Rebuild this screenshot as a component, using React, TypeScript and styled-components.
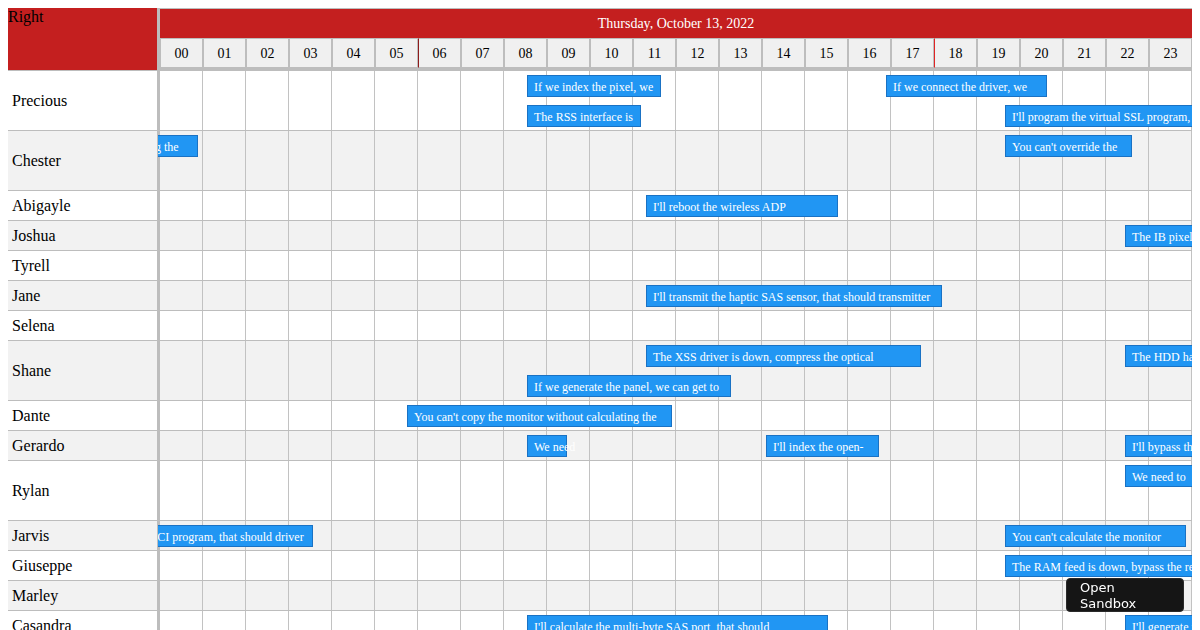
import React from "react";
import styled, {createGlobalStyle} from "styled-components";

const GlobalStyle = createGlobalStyle`
  body {
    margin: 8px;
    font-family: "Liberation Serif", "Times New Roman", serif;
    background: #ffffff;
    overflow: hidden;
  }
`;

const HOUR_W = 43;
const LANE_H = 30;

type SchedEvent = { x: number; w: number; lane: number; text: string };
type Resource = { name: string; lanes: number; events: Array<SchedEvent> };

const resources: Array<Resource> = [
    {
        name: "Precious", lanes: 2, events: [
            {x: 367, w: 134, lane: 0, text: "If we index the pixel, we"},
            {x: 726, w: 161, lane: 0, text: "If we connect the driver, we"},
            {x: 367, w: 114, lane: 1, text: "The RSS interface is"},
            {x: 845, w: 300, lane: 1, text: "I'll program the virtual SSL program, that"},
        ]
    },
    {
        name: "Chester", lanes: 2, events: [
            {x: -54, w: 92, lane: 0, text: "bypassing the"},
            {x: 845, w: 127, lane: 0, text: "You can't override the"},
        ]
    },
    {name: "Abigayle", lanes: 1, events: [{x: 486, w: 192, lane: 0, text: "I'll reboot the wireless ADP"}]},
    {name: "Joshua", lanes: 1, events: [{x: 965, w: 200, lane: 0, text: "The IB pixel is down"}]},
    {name: "Tyrell", lanes: 1, events: []},
    {
        name: "Jane", lanes: 1, events: [
            {x: 486, w: 296, lane: 0, text: "I'll transmit the haptic SAS sensor, that should transmitter"},
        ]
    },
    {name: "Selena", lanes: 1, events: []},
    {
        name: "Shane", lanes: 2, events: [
            {x: 486, w: 275, lane: 0, text: "The XSS driver is down, compress the optical"},
            {x: 965, w: 200, lane: 0, text: "The HDD hard drive is down"},
            {x: 367, w: 204, lane: 1, text: "If we generate the panel, we can get to"},
        ]
    },
    {
        name: "Dante", lanes: 1, events: [
            {x: 247, w: 265, lane: 0, text: "You can't copy the monitor without calculating the"},
        ]
    },
    {
        name: "Gerardo", lanes: 1, events: [
            {x: 367, w: 40, lane: 0, text: "We need"},
            {x: 606, w: 113, lane: 0, text: "I'll index the open-"},
            {x: 965, w: 200, lane: 0, text: "I'll bypass the"},
        ]
    },
    {name: "Rylan", lanes: 2, events: [{x: 965, w: 200, lane: 0, text: "We need to"}]},
    {
        name: "Jarvis", lanes: 1, events: [
            {x: -34, w: 187, lane: 0, text: "the PCI program, that should driver"},
            {x: 845, w: 181, lane: 0, text: "You can't calculate the monitor"},
        ]
    },
    {
        name: "Giuseppe", lanes: 1, events: [
            {x: 845, w: 300, lane: 0, text: "The RAM feed is down, bypass the redundant"},
        ]
    },
    {name: "Marley", lanes: 1, events: []},
    {
        name: "Casandra", lanes: 1, events: [
            {x: 367, w: 301, lane: 0, text: "I'll calculate the multi-byte SAS port, that should"},
            {x: 965, w: 200, lane: 0, text: "I'll generate the"},
        ]
    },
];

const hours = Array.from({length: 24}, (_, i) => String(i).padStart(2, "0"));

// hour cells that carry a coloured line on their left edge
const markers: Record<string, string> = {"06": "#8e1b1b", "18": "#e02424"};

const Scheduler = styled.div`
  width: 1184px;
`;

const HeaderRow = styled.div`
  display: flex;
`;

const CornerCell = styled.div`
  width: 149px;
  height: 62px;
  background: #c41f1f;
  border-bottom: 1px solid #bdbdbd;
  color: #000;
  font-size: 16px;
  line-height: 18px;
`;

const TimeHeader = styled.div`
  width: ${HOUR_W * 24}px;
  border-left: 3px solid #bdbdbd;
  border-top: 1px solid #bdbdbd;
  display: flex;
  flex-direction: column;
`;

const DateBar = styled.div`
  height: 29px;
  background: #c41f1f;
  color: #ffffff;
  font-size: 14px;
  display: flex;
  align-items: center;
  justify-content: center;
`;

const HourRow = styled.div`
  display: flex;
  border-bottom: 3px solid #bdbdbd;
`;

const HourCell = styled.div<{ $marker?: string }>`
  box-sizing: border-box;
  width: ${HOUR_W}px;
  height: 30px;
  border: 1px solid #bdbdbd;
  border-left-color: ${p => p.$marker ?? "#bdbdbd"};
  background: #f0f0f0;
  color: #000;
  font-size: 14px;
  padding-top: 1px;
  display: flex;
  align-items: center;
  justify-content: center;
`;

const Row = styled.div<{ $alt: boolean; $lanes: number }>`
  display: flex;
  height: ${p => p.$lanes * LANE_H - 1}px;
  border-bottom: 1px solid #bdbdbd;
  background: ${p => (p.$alt ? "#f2f2f2" : "#ffffff")};
`;

const Label = styled.div`
  width: 149px;
  box-sizing: border-box;
  padding-left: 4px;
  display: flex;
  align-items: center;
  font-size: 16px;
  color: #000;
`;

const Track = styled.div`
  position: relative;
  width: ${HOUR_W * 24}px;
  border-left: 3px solid #bdbdbd;
  background-image: repeating-linear-gradient(
    to right,
    transparent 0 ${HOUR_W - 1}px,
    #c2c2c2 ${HOUR_W - 1}px ${HOUR_W}px
  );
`;

const EventLayer = styled.div`
  position: absolute;
  top: 0;
  bottom: -1px;
  left: -2px;
  right: 0;
  overflow: hidden;
`;

const EventBox = styled.div`
  position: absolute;
  box-sizing: border-box;
  height: 22px;
  background: #2196f3;
  border: 1px solid #1a72c4;
  color: #ffffff;
  font-size: 12px;
  line-height: 21px;
  padding: 1px 6px 0;
  white-space: nowrap;
`;

const SandboxButton = styled.button`
  position: fixed;
  right: 16px;
  bottom: 18px;
  width: 118px;
  height: 34px;
  box-sizing: border-box;
  padding: 1px 13px;
  background: #151515;
  border: 1px solid #2a2a2a;
  border-radius: 4px;
  color: #ffffff;
  font-family: "DejaVu Sans", Verdana, sans-serif;
  font-size: 13px;
  line-height: 16px;
  text-align: left;
  cursor: pointer;
`;

export default function App() {
    return (
        <>
            <GlobalStyle/>
            <Scheduler>
                <HeaderRow>
                    <CornerCell>Right</CornerCell>
                    <TimeHeader>
                        <DateBar>Thursday, October 13, 2022</DateBar>
                        <HourRow>
                            {hours.map(h => (
                                <HourCell key={h} $marker={markers[h]}>
                                    {h}
                                </HourCell>
                            ))}
                        </HourRow>
                    </TimeHeader>
                </HeaderRow>
                {resources.map((r, i) => (
                    <Row key={r.name} $alt={i % 2 === 1} $lanes={r.lanes}>
                        <Label>{r.name}</Label>
                        <Track>
                            <EventLayer>
                                {r.events.map((e, j) => (
                                    <EventBox
                                        key={j}
                                        style={{left: e.x + 2, width: e.w, top: 4 + e.lane * LANE_H}}
                                    >
                                        {e.text}
                                    </EventBox>
                                ))}
                            </EventLayer>
                        </Track>
                    </Row>
                ))}
            </Scheduler>
            <SandboxButton>Open Sandbox</SandboxButton>
        </>
    );
}
